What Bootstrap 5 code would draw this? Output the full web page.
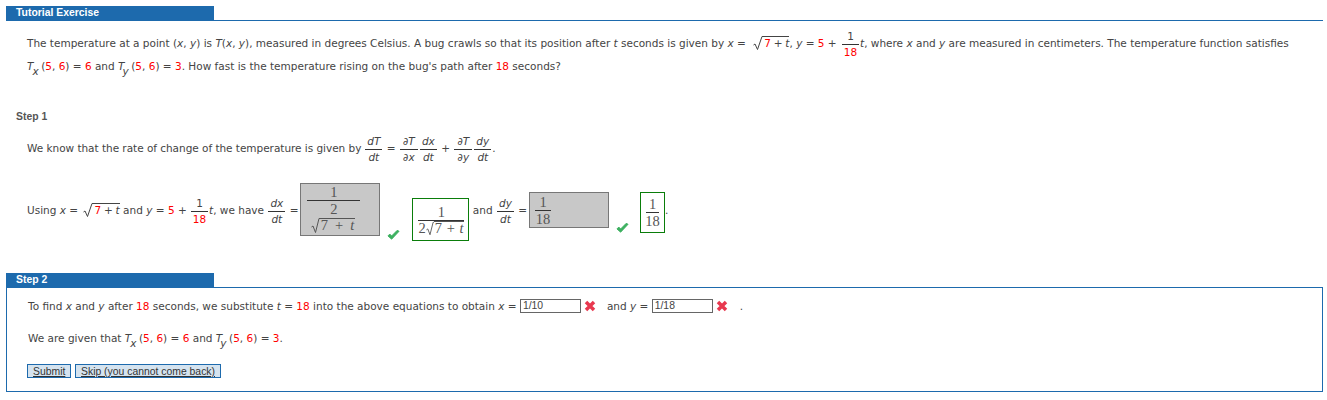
<!DOCTYPE html>
<html lang="en"><head><meta charset="utf-8"><title>Tutorial Exercise</title>
<link href="https://cdn.jsdelivr.net/npm/bootstrap@5.3.0/dist/css/bootstrap.min.css" rel="stylesheet">
<style>
body{background:#fff;color:#444;font-family:"DejaVu Sans",Verdana,sans-serif;font-size:10.5px;line-height:14px;height:400px;overflow:hidden}
.sheet{padding:6px 4px 0 6px}
.tab{width:208px;height:15px;background:#1d6aad;color:#fff;font:bold 10.4px/13px "Liberation Sans",sans-serif;padding-left:10px}
.tab2{margin-top:32px}
.rule{border-top:1.5px solid #1d6aad;margin-top:-1px}
.intro{padding:11px 0 0 21px;height:89px}
.ln{white-space:nowrap;display:flex;align-items:center}
.ln1{height:22px}
.ln2{height:24px}
.red{color:#f00}
i{font-style:italic}
.sub{position:relative;top:5px;left:-1px;font-style:italic;padding-right:1.5px}
.frac{display:inline-flex;flex-direction:column;align-items:center;line-height:15px;margin:3px 1px 0;min-width:17px}
.frac>span:first-child{border-bottom:1px solid #333;width:100%;text-align:center}
.fpart{min-width:18px}
.ln1 .frac{margin-left:2px}
.rad{display:inline-flex;align-items:flex-start;margin-left:2px}
.ln1 .rad{margin-left:4px}
.rad svg{display:block;flex:none}
.rad>span{border-top:1px solid #444;line-height:13px;padding:0 0 0 1px;word-spacing:-.5px}
.steph{font:bold 10.4px/14px "Liberation Sans",sans-serif;color:#555;padding-left:10px;height:16px}
.m{white-space:pre}
.tight{letter-spacing:-.03px;margin-right:3px}
.s1a{padding:5px 0 0 21px;height:53px}
.s1a .ln{height:34px}
.s1b{padding-left:21px;height:62px}
.s1b>.ln{height:62px}
.ans{background:#c8c8c8;border:1px solid #777;display:inline-flex;flex-direction:column;align-items:flex-start;font-family:"Liberation Serif",serif;color:#555;font-size:14.5px;flex:none;margin-left:2px}
.ansA{width:80px;height:53px;padding:0 6px;margin-bottom:1px}
.ansB{width:80px;height:36px;padding:1px 5px}
.gbox{border:1px solid #0a7d0a;display:inline-flex;font-family:"Liberation Serif",serif;color:#555;font-size:14.5px;justify-content:center;align-items:center;background:#fff;flex:none}
.gA{width:57px;height:43px;margin:19px 0 0 12px;padding:0 4px 0 5px}
.gB{width:25px;height:41px;margin:5px 0 0 11px;padding:0 5px}
.sf{display:flex;flex-direction:column;align-items:center;line-height:16px;width:100%}
.sf>span:first-child{border-bottom:1px solid #333;width:100%;text-align:center}
.sfA{width:53px}
.sfS{width:16px}
.two{display:block;text-align:center;line-height:17px}
.srad{display:inline-flex;align-items:flex-start;line-height:13px;margin-left:-2px;word-spacing:3.5px}
.srad2{margin-left:0;word-spacing:1px}
.srad svg{flex:none;display:block}
.srad>span{border-top:1px solid #555;padding:0 1px;white-space:pre}
.srad>.two{border:0;padding:0;line-height:15px}
.ck{flex:none;margin-left:7px}
.ckA{margin-top:50px}
.ckB{margin-top:36px}
.box2{border:1.5px solid #1d6aad;height:105px;margin-top:-1px;padding:11px 0 0 21px}
.inp{width:61px;height:14px;border:1px solid #666;padding:0 2px;flex:none;font:10.4px/12px "Liberation Sans",sans-serif;color:#444}
.xic{flex:none;margin-left:3px}
.acts{display:flex;gap:4px;margin:19px 0 0 -1px}
.bt{background:#d5e3ef;border:1px solid #1d6aad;color:#333;font:10.4px/11px "Liberation Sans",sans-serif;padding:1px 5px;height:14px;text-decoration:underline;border-radius:0}
.bt1{width:44px}
.bt2{width:146px}
.s2l2{margin-top:18px;height:14px}
.s2top{height:14px}
.andy{margin-left:11px}
.dot{margin-left:12px}
</style></head><body>
<div class="sheet">
<div class="tab">Tutorial Exercise</div>
<div class="rule"></div>
<div class="intro">
<div class="ln ln1"><span class="m">The temperature at a point (<i>x</i>, <i>y</i>) is <i>T</i>(<i>x</i>, <i>y</i>), measured in degrees Celsius. A bug crawls so that its position after <i>t</i> seconds is given by <i>x</i> = </span><span class="rad"><svg width="10" height="14" viewBox="0 0 10 14"><path d="M0.5 9 L2 8 L4.5 13.5 L9 .5 L10 .5" fill="none" stroke="#444"/></svg><span><span class="red">7</span> + <i>t</i></span></span><span class="m">, <i>y</i> = <span class="red">5</span> + </span><span class="frac"><span>1</span><span class="red">18</span></span><span class="m"><i>t</i>, where <i>x</i> and <i>y</i> are measured in centimeters. The temperature function satisfies</span></div>
<div class="ln ln2"><span class="m"><i>T</i><span class="sub">x</span>(<span class="red">5</span>, <span class="red">6</span>) = <span class="red">6</span> and <i>T</i><span class="sub">y</span>(<span class="red">5</span>, <span class="red">6</span>) = <span class="red">3</span>. How fast is the temperature rising on the bug's path after <span class="red">18</span> seconds?</span></div>
</div>
<div class="steph">Step 1</div>
<div class="s1a"><div class="ln"><span class="m tight">We know that the rate of change of the temperature is given by</span><span class="frac"><span><i>dT</i></span><span><i>dt</i></span></span><span class="m"> = </span><span class="frac fpart"><span>∂<i>T</i></span><span>∂<i>x</i></span></span><span class="frac"><span><i>dx</i></span><span><i>dt</i></span></span><span class="m"> + </span><span class="frac fpart"><span>∂<i>T</i></span><span>∂<i>y</i></span></span><span class="frac"><span><i>dy</i></span><span><i>dt</i></span></span><span>.</span></div></div>
<div class="s1b"><div class="ln"><span class="m">Using <i>x</i> = </span><span class="rad"><svg width="10" height="14" viewBox="0 0 10 14"><path d="M0.5 9 L2 8 L4.5 13.5 L9 .5 L10 .5" fill="none" stroke="#444"/></svg><span><span class="red">7</span> + <i>t</i></span></span><span class="m"> and <i>y</i> = <span class="red">5</span> + </span><span class="frac"><span>1</span><span class="red">18</span></span><span class="m"><i>t</i>, we have </span><span class="frac"><span><i>dx</i></span><span><i>dt</i></span></span><span class="m"> =</span><span class="ans ansA"><span class="sf sfA"><span>1</span><span><span class="two">2</span><span class="srad"><svg width="9" height="15" viewBox="0 0 9 15"><path d="M0.5 9 L2 8 L4.5 14.5 L8 .5 L9 .5" fill="none" stroke="#555"/></svg><span>7 + <i>t</i></span></span></span></span></span><svg class="ck ckA" width="13" height="12" viewBox="0 0 14 12"><path d="M1 7 L5 10.5 L13 2 L11 1 L5 7 L3 5Z" fill="#3cb060" stroke="#3cb060"/></svg><span class="gbox gA"><span class="sf"><span>1</span><span class="srad srad2"><span class="two">2</span><svg width="8" height="15" viewBox="0 0 9 15"><path d="M0.5 9 L2 8 L4.5 14.5 L8 .5 L9 .5" fill="none" stroke="#555"/></svg><span>7 + <i>t</i></span></span></span></span><span class="m"> and </span><span class="frac"><span><i>dy</i></span><span><i>dt</i></span></span><span class="m"> =</span><span class="ans ansB"><span class="sf sfS"><span>1</span><span>18</span></span></span><svg class="ck ckB" width="13" height="12" viewBox="0 0 14 12"><path d="M1 7 L5 10.5 L13 2 L11 1 L5 7 L3 5Z" fill="#3cb060" stroke="#3cb060"/></svg><span class="gbox gB"><span class="sf"><span>1</span><span>18</span></span></span><span>.</span></div></div>
<div class="tab tab2">Step 2</div>
<div class="box2">
<div class="ln s2top"><span class="m">To find <i>x</i> and <i>y</i> after <span class="red">18</span> seconds, we substitute <i>t</i> = <span class="red">18</span> into the above equations to obtain <i>x</i> = </span><span class="inp">1/10</span><svg width="12" height="12" viewBox="0 0 12 12" class="xic"><path d="M2 2 L10 10 M10 2 L2 10" stroke="#e8384f" stroke-width="3.5"/></svg><span class="m andy">and <i>y</i> = </span><span class="inp">1/18</span><svg width="12" height="12" viewBox="0 0 12 12" class="xic"><path d="M2 2 L10 10 M10 2 L2 10" stroke="#e8384f" stroke-width="3.5"/></svg><span class="m dot">.</span></div>
<div class="ln s2l2"><span class="m">We are given that <i>T</i><span class="sub">x</span>(<span class="red">5</span>, <span class="red">6</span>) = <span class="red">6</span> and <i>T</i><span class="sub">y</span>(<span class="red">5</span>, <span class="red">6</span>) = <span class="red">3</span>.</span></div>
<div class="acts"><button class="bt bt1" type="button">Submit</button><button class="bt bt2" type="button">Skip (you cannot come back)</button></div>
</div>
</div>
<script src="https://cdn.jsdelivr.net/npm/bootstrap@5.3.0/dist/js/bootstrap.bundle.min.js"></script>
</body></html>
